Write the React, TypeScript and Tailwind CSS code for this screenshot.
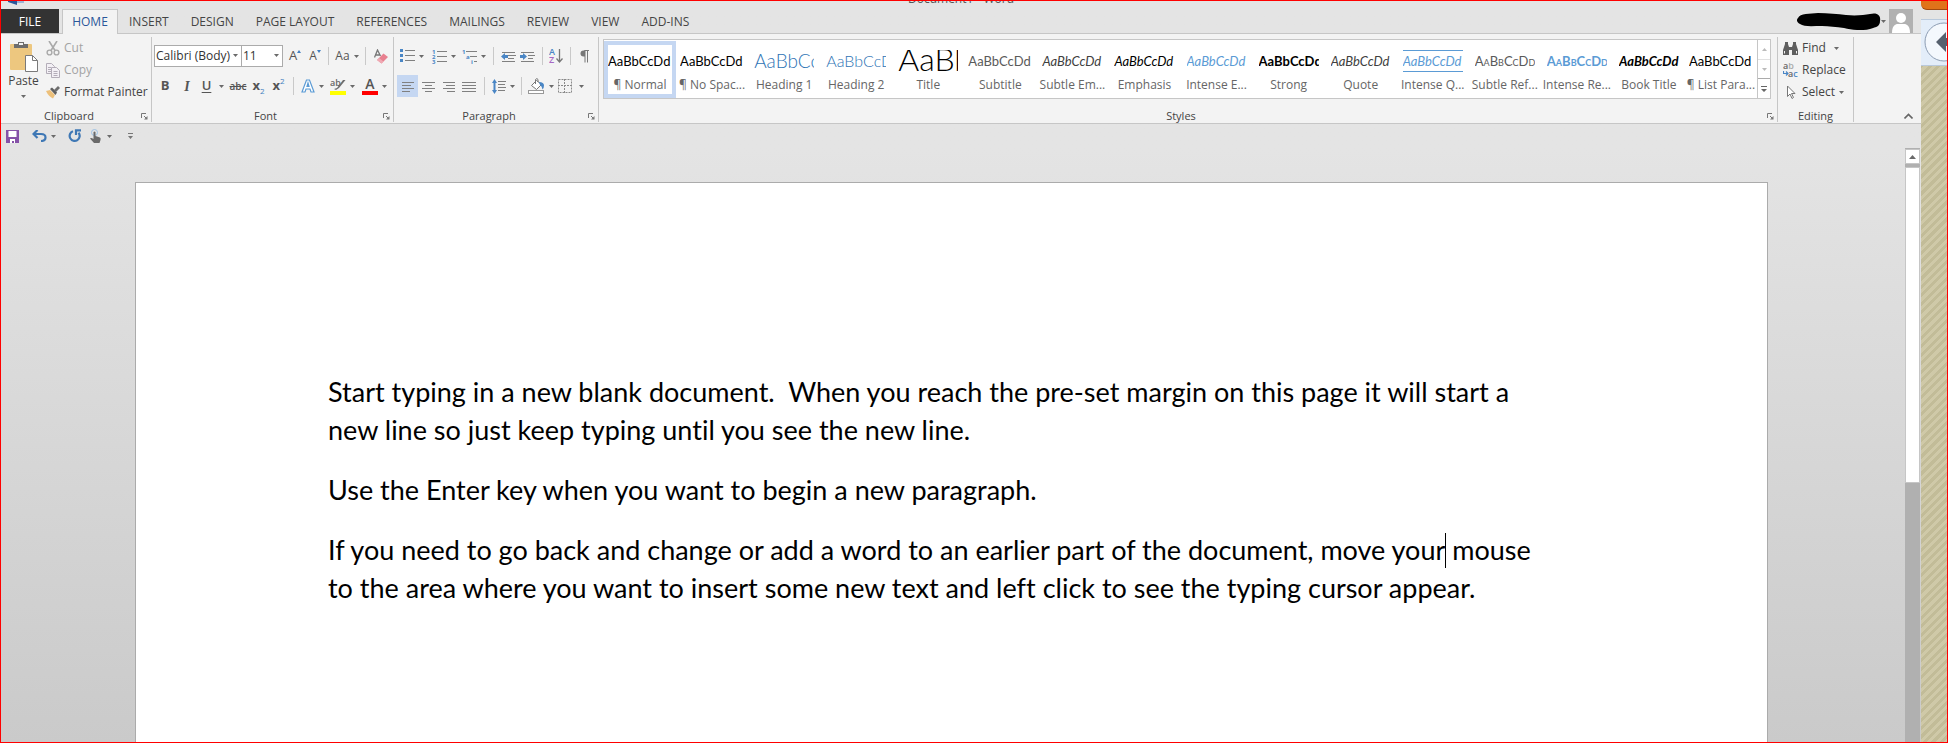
import type { ReactNode } from "react";
import { clsx } from "clsx";

function Caret() {
  return (
    <svg width="5" height="3" viewBox="0 0 5 3" className="shrink-0">
      <path d="M0 0h5L2.5 3z" fill="#6a6a6a" />
    </svg>
  );
}

function Sep() {
  return <span className="mx-[5px] h-[18px] w-px shrink-0 bg-[#c9c9c9]" />;
}

type ToolProps = {
  label: string;
  className: string;
  menu?: boolean;
  children: ReactNode;
};

function Tool({ label, className, menu, children }: ToolProps) {
  return (
    <button
      type="button"
      aria-label={label}
      className={clsx(
        "flex h-[22px] shrink-0 items-center justify-center text-[#555]",
        className,
      )}
    >
      {children}
      {menu && (
        <span className="ml-1">
          <Caret />
        </span>
      )}
    </button>
  );
}

function Lines({ rows }: { rows: number[][] }) {
  return (
    <g fill="#808080">
      {rows.map(([x, y, w]) => (
        <rect key={y} x={x} y={y} width={w} height="1" />
      ))}
    </g>
  );
}

type GroupProps = {
  title: string;
  className: string;
  launcher?: boolean;
  children: ReactNode;
};

function Group({ title, className, launcher, children }: GroupProps) {
  return (
    <section
      className={clsx(
        "mt-[3px] mb-px flex flex-col border-r border-[#c6c6c6]",
        className,
      )}
    >
      <div className="h-[73px]">{children}</div>
      <div className="flex h-3 items-center text-[11px] leading-3 text-[#444]">
        <h2 className="flex-1 text-center">{title}</h2>
        {launcher && (
          <button type="button" aria-label={`${title} settings`} className="w-[14px]">
            <svg width="7" height="7" viewBox="0 0 7 7" className="mx-auto">
              <path d="M.5 5V.5H5M3 3l2.500 2.500" stroke="#777" fill="none" />
              <path d="M6.500 3v3.500H3z" fill="#777" />
            </svg>
          </button>
        )}
      </div>
    </section>
  );
}

function Clipboard() {
  return (
    <Group title="Clipboard" className="w-[151px]" launcher>
      <div className="flex text-[12px]">
        <button
          type="button"
          className="flex w-[45px] flex-col items-center pt-1 text-[#444]"
        >
          <svg width="29" height="31" viewBox="0 0 29 31">
            <rect x="1" y="3" width="22" height="26" rx="1" fill="#edc77f" />
            <path d="M5 3h4V1h6v2h4v4H5z" fill="#6d6d6d" />
            <rect x="10" y="2" width="4" height="2" fill="#f3f3f3" />
            <path d="M16.500 14.500h7l5 5v11h-12z" fill="#fff" stroke="#7a7a7a" />
            <path d="M23.500 14.500v5h5" fill="none" stroke="#7a7a7a" />
          </svg>
          <span className="leading-[18px]">Paste</span>
          <span className="flex h-3 items-center">
            <Caret />
          </span>
        </button>
        <div className="flex flex-col text-[#a3a3a3]">
          <button type="button" className="flex h-[22px] items-center gap-1">
            <svg width="14" height="15" viewBox="0 0 14 15" fill="none" stroke="#a9a9a9">
              <path d="M3 0l6 9.500M11 0L5 9.500" strokeWidth="1.600" />
              <circle cx="3.500" cy="11.500" r="2.400" strokeWidth="1.400" />
              <circle cx="10.500" cy="11.500" r="2.400" strokeWidth="1.400" />
            </svg>
            Cut
          </button>
          <button type="button" className="flex h-[22px] items-center gap-1">
            <svg width="14" height="15" viewBox="0 0 14 15" fill="#f3f0f5" stroke="#b3adb8">
              <path d="M.5.5h5l3 3v7h-8z" />
              <path d="M2 4.500h3M2 6.500h3M2 8.500h3" />
              <path d="M5.500 4.500h5l3 3v7h-8z" />
              <path d="M7.500 8.500h4M7.500 10.500h4M7.500 12.500h4" />
            </svg>
            Copy
          </button>
          <button
            type="button"
            className="flex h-[22px] items-center gap-1 whitespace-nowrap text-[#444]"
          >
            <svg width="14" height="13" viewBox="0 0 14 13">
              <path d="M0 5l4-1 5 5-2 3.500C4 11 2 9 0 5z" fill="#edc07a" />
              <path d="M4 3l2-1.500 5 5L9.500 9z" fill="#5f5f5f" />
              <path d="M8 4l4-4 2 2-4 4z" fill="#6d6d6d" />
            </svg>
            Format Painter
          </button>
        </div>
      </div>
    </Group>
  );
}

function FontGroup() {
  return (
    <Group title="Font" className="w-[242px]" launcher>
      <div className="flex flex-col gap-2 pt-2 pl-[2px]">
        <div className="flex h-[22px] items-center">
          <div className="relative">
            <select
              aria-label="Font name"
              className="block h-[22px] w-[88px] appearance-none border border-[#ababab] bg-white pr-[10px] pl-px text-[12px] text-[#333]"
            >
              <option>Calibri (Body)</option>
            </select>
            <span className="pointer-events-none absolute top-[9px] right-1">
              <Caret />
            </span>
          </div>
          <div className="relative -ml-px">
            <select
              aria-label="Font size"
              className="block h-[22px] w-[42px] appearance-none border border-[#ababab] bg-white pl-px text-[12px] text-[#333]"
            >
              <option>11</option>
            </select>
            <span className="pointer-events-none absolute top-[9px] right-1">
              <Caret />
            </span>
          </div>
          <Tool label="Grow font" className="w-6">
            <span className="text-[13px]">A</span>
            <svg width="4" height="12" viewBox="0 0 4 12">
              <path d="M0 3L2 0l2 3z" fill="#3f7dbf" />
            </svg>
          </Tool>
          <Tool label="Shrink font" className="w-4">
            <span className="text-[12px]">A</span>
            <svg width="4" height="12" viewBox="0 0 4 12">
              <path d="M0 0h4L2 3z" fill="#3f7dbf" />
            </svg>
          </Tool>
          <Sep />
          <Tool label="Change case" className="w-[26px]" menu>
            <span className="text-[12px]">Aa</span>
          </Tool>
          <Sep />
          <Tool label="Clear formatting" className="w-5">
            <svg width="14" height="15" viewBox="0 0 14 15">
              <path d="M.5 8.500L3.500 1l3 6M1.500 6h4" stroke="#777" strokeWidth="1.300" fill="none" />
              <path d="M9.500 4.500l4.500 3.500-6.500 6.500L3 11z" fill="#e8808f" />
              <path d="M5 9l4.500 3.500-2 2L3 11z" fill="#f0a9b3" />
            </svg>
          </Tool>
        </div>
        <div className="flex h-[22px] items-center">
          <Tool label="Bold" className="w-[22px]">
            <b className="text-[13px]">B</b>
          </Tool>
          <Tool label="Italic" className="w-[22px]">
            <i className="font-['Liberation_Serif',serif] text-[14px] font-bold">I</i>
          </Tool>
          <Tool label="Underline" className="w-[30px]" menu>
            <span className="mr-1 text-[13px] font-semibold underline underline-offset-2">U</span>
          </Tool>
          <Tool label="Strikethrough" className="w-5">
            <span className="text-[10px] font-semibold line-through">abc</span>
          </Tool>
          <Tool label="Subscript" className="w-[21px]">
            <b className="text-[13px]">x</b>
            <span className="self-end text-[8px] leading-3 text-[#3f7dbf]">2</span>
          </Tool>
          <Tool label="Superscript" className="w-[19px]">
            <b className="text-[13px]">x</b>
            <span className="self-start text-[8px] leading-3 text-[#3f7dbf]">2</span>
          </Tool>
          <Sep />
          <Tool label="Text effects" className="w-[27px]" menu>
            <svg width="14" height="14" viewBox="0 0 14 14">
              <path
                d="M1 13L5.500 1h3L13 13h-3l-1-3H5l-1 3zM6 7.500h2L7 4z"
                fill="#fff"
                stroke="#5b9bd5"
                strokeWidth="1.200"
              />
            </svg>
          </Tool>
          <Tool label="Highlight colour" className="w-8" menu>
            <svg width="16" height="17" viewBox="0 0 16 17">
              <text x="0" y="8" fontSize="9" fontWeight="600" fill="#666">ab</text>
              <path d="M15.500 2L9 10l-3 2-2-1 3-1 6-8z" fill="#6d6d6d" />
              <rect y="13" width="16" height="4" fill="#ff0" />
            </svg>
          </Tool>
          <Tool label="Font colour" className="w-8" menu>
            <svg width="16" height="17" viewBox="0 0 16 17">
              <text x="8" y="11" textAnchor="middle" fontSize="14" fontWeight="600" fill="#555">A</text>
              <rect y="13" width="16" height="4" fill="#f00" />
            </svg>
          </Tool>
        </div>
      </div>
    </Group>
  );
}

function ParagraphGroup() {
  return (
    <Group title="Paragraph" className="w-[205px]" launcher>
      <div className="flex flex-col gap-2 pt-2 pl-px">
        <div className="flex h-[22px] items-center">
          <Tool label="Bullets" className="w-[34px]" menu>
            <svg width="15" height="14" viewBox="0 0 15 14">
              <Lines rows={[[5, 1, 10], [5, 6, 10], [5, 11, 10]]} />
              <path d="M0 0h3v3H0zM0 5h3v3H0zM0 10h3v3H0z" fill="#4a86c5" />
            </svg>
          </Tool>
          <Tool label="Numbering" className="w-[30px]" menu>
            <svg width="15" height="15" viewBox="0 0 15 15" fontSize="6" fontWeight="700" fill="#4a86c5">
              <text x="0" y="5">1</text>
              <text x="0" y="10">2</text>
              <text x="0" y="15">3</text>
              <Lines rows={[[5, 2, 10], [5, 7, 10], [5, 12, 10]]} />
            </svg>
          </Tool>
          <Tool label="Multilevel list" className="w-[29px]" menu>
            <svg width="15" height="15" viewBox="0 0 15 15" fontSize="6" fontWeight="700" fill="#4a86c5">
              <text x="0" y="5">1</text>
              <text x="4" y="10">a</text>
              <text x="9" y="15">i</text>
              <Lines rows={[[4, 2, 11], [8, 7, 7], [12, 12, 3]]} />
            </svg>
          </Tool>
          <Sep />
          <Tool label="Decrease indent" className="w-[18px]">
            <svg width="15" height="11" viewBox="0 0 15 11">
              <Lines rows={[[1, 1, 13], [7, 4, 8], [7, 7, 6], [1, 10, 13]]} />
              <path d="M0 5.500L4 2v2h3v3H4v2z" fill="#4a86c5" />
            </svg>
          </Tool>
          <Tool label="Increase indent" className="w-5">
            <svg width="15" height="11" viewBox="0 0 15 11">
              <Lines rows={[[1, 1, 13], [8, 4, 7], [8, 7, 5], [1, 10, 13]]} />
              <path d="M7 5.500L3 2v2H0v3h3v2z" fill="#4a86c5" />
            </svg>
          </Tool>
          <Sep />
          <Tool label="Sort" className="w-[17px]">
            <svg width="15" height="16" viewBox="0 0 15 16" fontSize="9" fontWeight="600">
              <text x="0" y="7" fill="#4a86c5">A</text>
              <text x="0" y="15" fill="#a667c4">Z</text>
              <path d="M10.500 1v13M7.500 10.500l3 3.500 3-3.500" fill="none" stroke="#777" strokeWidth="1.300" />
            </svg>
          </Tool>
          <Sep />
          <Tool label="Show marks" className="w-4">
            <svg width="9" height="13" viewBox="0 0 9 13">
              <path d="M5 .5H3.500a3 3 0 000 6H5z" fill="#777" />
              <path d="M4.500 .5H9M5 0v12.500M7.500 0v12.500" stroke="#777" />
            </svg>
          </Tool>
        </div>
        <div className="flex h-[22px] items-center pl-[2px]">
          <Tool label="Align left" className="w-[21px] bg-[#c5d7f2]">
            <svg width="12" height="11" viewBox="0 0 12 11">
              <Lines rows={[[0, 1, 12], [0, 4, 9], [0, 7, 12], [0, 10, 8]]} />
            </svg>
          </Tool>
          <Tool label="Align center" className="w-[21px]">
            <svg width="13" height="11" viewBox="0 0 13 11">
              <Lines rows={[[0, 1, 13], [3, 4, 7], [0, 7, 13], [3, 10, 7]]} />
            </svg>
          </Tool>
          <Tool label="Align right" className="w-5">
            <svg width="12" height="11" viewBox="0 0 12 11">
              <Lines rows={[[0, 1, 12], [3, 4, 9], [0, 7, 12], [4, 10, 8]]} />
            </svg>
          </Tool>
          <Tool label="Justify" className="w-5">
            <svg width="14" height="11" viewBox="0 0 14 11">
              <Lines rows={[[0, 1, 14], [0, 4, 14], [0, 7, 14], [0, 10, 14]]} />
            </svg>
          </Tool>
          <Sep />
          <Tool label="Line spacing" className="w-[26px]" menu>
            <svg width="14" height="15" viewBox="0 0 14 15">
              <path d="M2.500 0L5 4H3.500v7H5l-2.500 4L0 11h1.500V4H0z" fill="#4a86c5" />
              <Lines rows={[[6, 2, 8], [6, 5, 7], [6, 8, 8], [6, 11, 7]]} />
            </svg>
          </Tool>
          <Sep />
          <Tool label="Shading" className="w-7" menu>
            <svg width="17" height="16" viewBox="0 0 17 16">
              <path d="M3.500 7.500l5-5 5 4-5 5z" fill="#fff" stroke="#777" />
              <path d="M7.500 6V1.500q1.500-2 2.500 0V4" fill="none" stroke="#777" />
              <path d="M11 4q5 0 5 3.500 0 2.500-1.500 4Q14 8 12 7z" fill="#4a86c5" />
              <rect x=".5" y="12.500" width="15" height="3" fill="#fff" stroke="#999" />
            </svg>
          </Tool>
          <Tool label="Borders" className="w-[31px]" menu>
            <svg width="14" height="14" viewBox="0 0 14 14" fill="none" stroke="#8a8a8a" className="mr-[3px]">
              <path d="M.5.500h13v13H.5zM6.500 0v14M0 6.500h14" strokeDasharray="2 1" />
            </svg>
          </Tool>
        </div>
      </div>
    </Group>
  );
}

const STYLES = [
  { name: "¶ Normal", look: "w-16 text-[13px] text-black" },
  { name: "¶ No Spac...", look: "w-16 text-[13px] text-black" },
  { name: "Heading 1", look: "w-[60px] text-[19px] font-light text-[#2e74b5]" },
  { name: "Heading 2", look: "w-[60px] text-[16px] font-light text-[#2e74b5]" },
  { name: "Title", look: "w-[60px] pb-1 text-[32px] font-light text-black" },
  { name: "Subtitle", look: "w-16 text-[13px] text-[#5a5a5a]" },
  { name: "Subtle Em...", look: "w-[60px] text-[13px] italic text-[#404040]" },
  { name: "Emphasis", look: "w-[60px] text-[13px] italic text-black" },
  { name: "Intense E...", look: "w-[60px] text-[13px] italic text-[#5b9bd5]" },
  { name: "Strong", look: "w-[60px] text-[13px] font-bold text-black" },
  { name: "Quote", look: "w-[60px] text-[13px] italic text-[#404040]" },
  {
    name: "Intense Q...",
    look: "w-[60px] border-y border-[#5b9bd5] text-[13px] italic text-[#5b9bd5]",
  },
  { name: "Subtle Ref...", look: "w-[60px] text-[13px] [font-variant:small-caps] text-[#5a5a5a]" },
  {
    name: "Intense Re...",
    look: "w-[60px] text-[13px] font-bold [font-variant:small-caps] text-[#5b9bd5]",
  },
  { name: "Book Title", look: "w-[60px] text-[13px] font-bold italic text-black" },
  { name: "¶ List Para...", look: "w-16 text-[13px] text-black" },
];

function StylesGroup() {
  return (
    <Group title="Styles" className="min-w-0 flex-1" launcher>
      <div className="flex h-[62px] pt-[2px] pr-[6px] pl-1">
        <div className="grid flex-1 grid-cols-[repeat(16,minmax(0,1fr))] overflow-hidden border border-r-0 border-[#c6c6c6] bg-white">
          {STYLES.map((style, i) => (
            <button
              key={style.name}
              type="button"
              className={clsx(
                "my-px flex flex-col items-center border-4 pt-[5px]",
                i === 0 ? "border-[#c5d7f2]" : "border-transparent",
              )}
            >
              <span
                className={clsx(
                  "flex h-[22px] items-center overflow-hidden font-[Lato,sans-serif] leading-[22px] whitespace-nowrap",
                  style.look,
                )}
              >
                AaBbCcDd
              </span>
              <span className="mt-1 text-[12px] leading-[18px] whitespace-nowrap text-[#666]">
                {style.name}
              </span>
            </button>
          ))}
        </div>
        <div className="flex w-[14px] flex-col border border-[#c6c6c6] bg-white">
          <button type="button" aria-label="Previous styles" className="flex flex-1 items-center justify-center border-b border-[#e1e1e1]">
            <svg width="5" height="3" viewBox="0 0 5 3">
              <path d="M0 3h5L2.500 0z" fill="#bbb" />
            </svg>
          </button>
          <button type="button" aria-label="Next styles" className="flex flex-1 items-center justify-center border-b border-[#ababab]">
            <svg width="5" height="3" viewBox="0 0 5 3">
              <path d="M0 0h5L2.500 3z" fill="#bbb" />
            </svg>
          </button>
          <button type="button" aria-label="More styles" className="flex flex-1 items-center justify-center">
            <svg width="6" height="6" viewBox="0 0 6 6">
              <path d="M0 0h6v1H0zM0 3h6L3 6z" fill="#666" />
            </svg>
          </button>
        </div>
      </div>
    </Group>
  );
}

function EditingGroup() {
  return (
    <Group title="Editing" className="w-[76px]">
      <div className="flex flex-col pl-[5px] text-[12px] text-[#444]">
        <button type="button" className="flex h-[22px] items-center gap-1">
          <svg width="15" height="13" viewBox="0 0 15 13" fill="#5f5f5f">
            <path d="M2 2V0h3v2l1 3h3l1-3V0h3v2l2 6v5H9V8H6v5H0V8z" />
            <path d="M1.500 9v2.500M13.500 9v2.500" stroke="#f3f3f3" />
          </svg>
          <span className="mr-1">Find</span>
          <Caret />
        </button>
        <button type="button" className="flex h-[22px] items-center gap-1">
          <svg width="15" height="15" viewBox="0 0 15 15" fontSize="9" fontWeight="600">
            <text x="0" y="6" fill="#666">a<tspan fill="#aaa">b</tspan></text>
            <text x="5" y="14" fill="#666">a<tspan fill="#4a86c5">c</tspan></text>
            <path d="M.5 8v2.500h4M3 8.500l2 2-2 2" fill="none" stroke="#4a86c5" strokeWidth="1.200" />
          </svg>
          Replace
        </button>
        <button type="button" className="flex h-[22px] items-center gap-1">
          <svg width="15" height="14" viewBox="0 0 15 14">
            <path d="M4.500 1v10.500l2.500-2.500 2 4.500 1.500-1-2-4h3.500z" fill="#fff" stroke="#777" />
          </svg>
          Select
          <Caret />
        </button>
      </div>
    </Group>
  );
}

const TABS = [
  "INSERT",
  "DESIGN",
  "PAGE LAYOUT",
  "REFERENCES",
  "MAILINGS",
  "REVIEW",
  "VIEW",
  "ADD-INS",
];

function TabBar() {
  return (
    <nav className="flex h-[25px] items-stretch border-b border-[#c6c6c6] text-[12px] text-[#444]">
      <button type="button" className="w-[58px] bg-[#333] pt-px text-white">
        FILE
      </button>
      <button
        type="button"
        className="-mb-px ml-[3px] w-[56px] border border-b-0 border-[#c6c6c6] bg-[#f3f3f3] text-[#2b579a]"
      >
        HOME
      </button>
      {TABS.map((tab) => (
        <button key={tab} type="button" className="px-[11px] pt-px">
          {tab}
        </button>
      ))}
      <div className="ml-auto flex items-center pr-2">
        <svg width="85" height="17" viewBox="0 0 85 17">
          <path
            d="M2 5C4 0 14 1 22 0c10 0 20 1 28 2 10 1 18 0 24-1 8-2 11 2 10 7 0 5-3 6-10 8-8 2-18 1-26-1-8-1-15-2-22-2C16 13 8 14 4 11 1 9 0 7 2 5z"
            fill="#000"
          />
        </svg>
        <Caret />
        <svg width="24" height="24" viewBox="0 0 24 24" className="ml-[3px]">
          <rect width="24" height="24" fill="#b1b1b1" />
          <circle cx="12" cy="9" r="5" fill="#fff" />
          <path d="M3 24c0-7 3-9 6-9h6c3 0 6 2 6 9z" fill="#fff" />
        </svg>
      </div>
    </nav>
  );
}

function QuickAccess() {
  return (
    <div className="flex h-6 items-center pl-[5px]">
      <button type="button" aria-label="Save">
        <svg width="13" height="13" viewBox="0 0 13 13">
          <path d="M0 0h13v13H0z" fill="#8552a8" />
          <path d="M2.500 1h8v6h-8zM4 9h5v4H8v-2H6v2H4z" fill="#fff" />
        </svg>
      </button>
      <button type="button" aria-label="Undo" className="ml-[13px] flex items-center gap-1">
        <svg width="15" height="12" viewBox="0 0 15 12" fill="none" stroke="#3f78b5" strokeWidth="2.200">
          <path d="M5.500 0L1.500 4l4 4M2 4h7c6 0 6 7 0 7" />
        </svg>
        <Caret />
      </button>
      <button type="button" aria-label="Repeat" className="ml-3">
        <svg width="14" height="14" viewBox="0 0 14 14" fill="none" stroke="#3f78b5" strokeWidth="2.200">
          <path d="M5 2.200a5 5 0 105.500 1.500M8 6V1.300h5" />
        </svg>
      </button>
      <button type="button" aria-label="Touch mode" className="ml-2 flex items-center gap-[6px]">
        <svg width="11" height="14" viewBox="0 0 11 14">
          <circle cx="4.500" cy="3.500" r="3" fill="none" stroke="#9dc0e3" />
          <path d="M3.500 3q1-1 2 0v4l4.500 1.500q1 .5.500 2.500l-1 3H4L0 9.500q1-1 3.500.5z" fill="#6a6a6a" />
        </svg>
        <Caret />
      </button>
      <button type="button" aria-label="Customize toolbar" className="ml-4">
        <svg width="5" height="6" viewBox="0 0 5 6">
          <path d="M0 0h5v1H0zM0 3h5L2.500 6z" fill="#777" />
        </svg>
      </button>
    </div>
  );
}

function Document() {
  return (
    <div className="flex flex-1">
      <main className="mt-[34px] mr-[137px] ml-[134px] flex-1 border border-b-0 border-[#ababab] bg-white pt-[190px] pr-[218px] pl-[192px] font-[Lato,sans-serif] text-[27px] leading-[38px] whitespace-pre-wrap text-black [font-variant-ligatures:none]">
        <p className="mb-[22px]">
          Start typing in a new blank document.{"  "}When you reach the pre-set
          margin on this page it will start a new line so just keep typing until
          you see the new line.
        </p>
        <p className="mb-[22px]">
          Use the Enter key when you want to begin a new paragraph.
        </p>
        <p>
          If you need to go back and change or add a word to an earlier part of
          the document, move your
          <span className="relative">
            <span className="absolute top-0 left-0 h-[35px] w-px bg-black" />
          </span>{" "}
          mouse to the area where you want to insert some new text and left
          click to see the typing cursor appear.
        </p>
      </main>
      <div className="mr-px flex w-[15px] flex-col bg-[#b0b0b0]">
        <button
          type="button"
          aria-label="Scroll up"
          className="mt-px flex h-[15px] items-center justify-center border border-[#c6c6c6] bg-white"
        >
          <svg width="7" height="4" viewBox="0 0 7 4">
            <path d="M0 4h7L3.500 0z" fill="#6a6a6a" />
          </svg>
        </button>
        <div className="mt-[3px] h-[316px] border border-[#c6c6c6] bg-white" />
      </div>
    </div>
  );
}

function BrowserEdge() {
  return (
    <aside className="flex w-[26px] flex-col overflow-hidden bg-[repeating-linear-gradient(135deg,#cfc9a8_0px,#cfc9a8_3px,#c2bc98_3px,#c2bc98_6px)]">
      <div className="h-[18px] bg-[#e4e4e4]">
        <div className="h-[9px] rounded-bl-md border-b border-[#a04a10] bg-[#e0731a]" />
      </div>
      <div className="h-[47px] border-y border-[#b9c9dc] bg-[#e3edf9]">
        <svg width="26" height="45" viewBox="0 0 26 45">
          <circle cx="23" cy="22" r="19" fill="#f4f8fd" stroke="#8d9db3" />
          <path d="M15 22L25 12v6h2v8h-2v6z" fill="#56606e" />
        </svg>
      </div>
    </aside>
  );
}

export default function App() {
  return (
    <div className="flex min-h-screen border border-[#f00] bg-[#e4e4e4] font-['Open_Sans',sans-serif]">
      <div className="flex min-w-0 flex-1 flex-col bg-linear-to-b from-[#e4e4e4] from-20% to-[#cacaca]">
        <header>
          <div className="flex h-2 items-start overflow-hidden">
            <svg width="24" height="4" viewBox="0 0 24 4">
              <path d="M7 0h9v4L7 1z" fill="#2b579a" />
              <path d="M16 0h7v2h-7z" fill="#9db4d6" />
            </svg>
            <h1 className="-mt-[9px] flex-1 pr-6 text-center text-[12px] leading-[14px] text-[#555]">
              Document1 - Word
            </h1>
          </div>
          <TabBar />
          <div className="flex h-[90px] border-b border-[#c6c6c6] bg-[#f3f3f3]">
            <Clipboard />
            <FontGroup />
            <ParagraphGroup />
            <StylesGroup />
            <EditingGroup />
            <div className="flex w-[67px] items-end justify-end pr-2 pb-1">
              <button type="button" aria-label="Collapse ribbon">
                <svg width="9" height="6" viewBox="0 0 9 6">
                  <path d="M.5 5.500l4-4 4 4" fill="none" stroke="#666" strokeWidth="1.600" />
                </svg>
              </button>
            </div>
          </div>
          <QuickAccess />
        </header>
        <Document />
      </div>
      <BrowserEdge />
    </div>
  );
}
